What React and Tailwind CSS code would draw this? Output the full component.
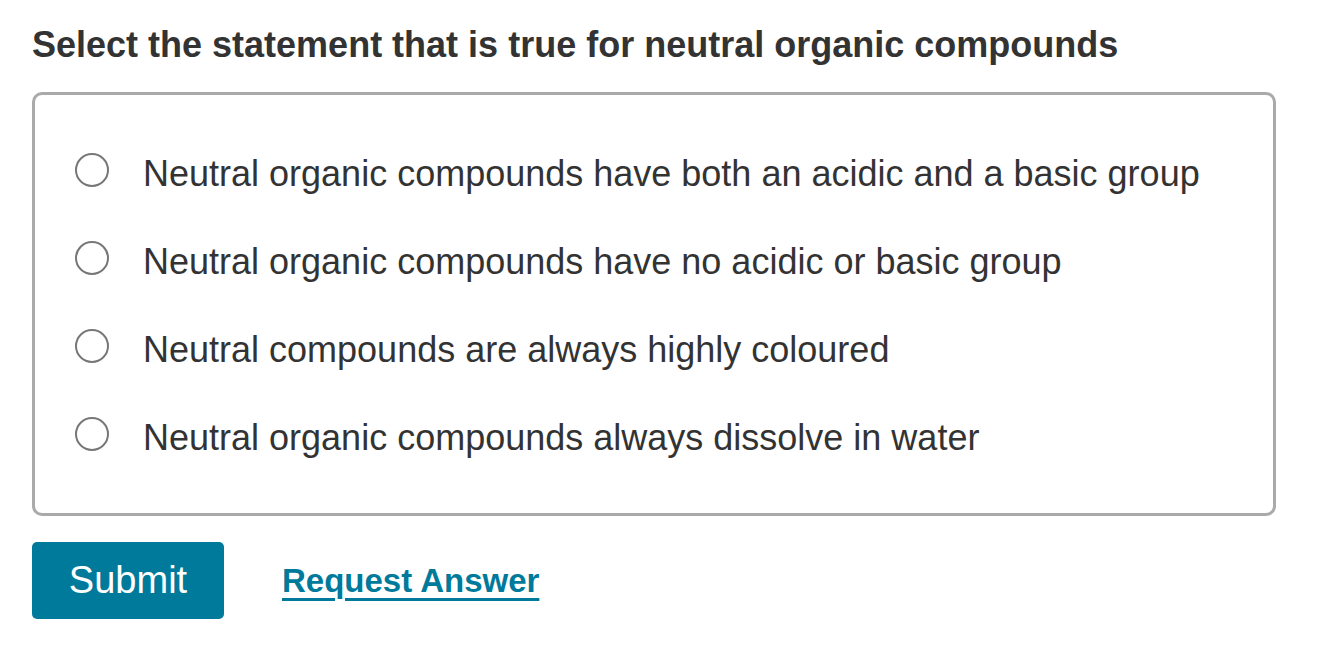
export default function App() {
  const options = [
    "Neutral organic compounds have both an acidic and a basic group",
    "Neutral organic compounds have no acidic or basic group",
    "Neutral compounds are always highly coloured",
    "Neutral organic compounds always dissolve in water",
  ];
  return (
    <div className="w-[1318px] h-[646px] bg-white text-[#333] pl-[32px] pt-[23px]" style={{ fontFamily: '"Liberation Sans", Arial, sans-serif' }}>
      <h1 className="text-[36px] font-bold leading-[44px] text-[#333]">
        Select the statement that is true for neutral organic compounds
      </h1>
      <div className="mt-[25px] w-[1244px] h-[424px] border-[3px] border-[#aaaaaa] rounded-[10px] pl-[40px] pt-[57px] flex flex-col gap-[44px]">
        {options.map((o) => (
          <label key={o} className="flex items-start gap-[34px] h-[44px]">
            <span className="mt-[1px] w-[34px] h-[34px] rounded-full border-2 border-[#777] shrink-0" />
            <span className="text-[36px] leading-[44px]">{o}</span>
          </label>
        ))}
      </div>
      <div className="mt-[26px] flex items-center gap-[58px]">
        <button className="w-[192px] h-[77px] bg-[#007a9b] rounded-[5px] text-white text-[38px]">Submit</button>
        <a className="text-[33px] font-bold text-[#007a9b] underline underline-offset-[6px] decoration-[3px]">Request Answer</a>
      </div>
    </div>
  );
}
